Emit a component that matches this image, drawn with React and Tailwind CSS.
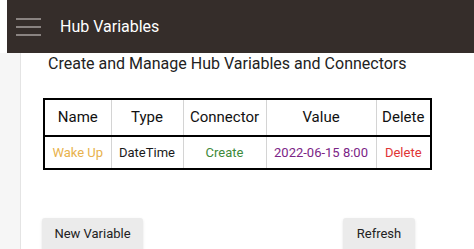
import React from "react";

const columns = [
  { label: "Name", width: "w-[67px]" },
  { label: "Type", width: "w-[72px]" },
  { label: "Connector", width: "w-[83px]" },
  { label: "Value", width: "w-[110px]" },
  { label: "Delete", width: "w-[55px]" },
];

const App = () => {
  return (
    <div
      className="w-[474px] h-[249px] overflow-hidden bg-white flex flex-col"
      style={{ fontFamily: "Roboto, 'Liberation Sans', sans-serif" }}
    >
      {/* top bar */}
      <div className="ml-[7px] h-[53px] shrink-0 bg-[#352d2a] flex items-center">
        <div className="ml-[9px] w-[25px] flex flex-col gap-[6px]">
          <span className="block h-[2px] bg-[#8a8381]" />
          <span className="block h-[2px] bg-[#8a8381]" />
          <span className="block h-[2px] bg-[#8a8381]" />
        </div>
        <span className="ml-[19px] text-white text-[16px] leading-none">Hub Variables</span>
      </div>

      <div className="flex flex-1">
        {/* side strip */}
        <div className="w-[21px] shrink-0 bg-[#f6f6f6] border-r border-[#e4e4e4]" />

        <div className="flex-1 flex flex-col">
          <h1 className="pl-[27px] pt-[1px] text-[16px] leading-[20px] text-[#222]">
            Create and Manage Hub Variables and Connectors
          </h1>

          <table className="ml-[22px] mt-[24px] w-[387px] border-collapse border-2 border-black table-fixed">
            <thead>
              <tr className="h-[37px] border-b-2 border-black">
                {columns.map((c) => (
                  <th
                    key={c.label}
                    className={`${c.width} font-normal text-[15px] text-[#111] border-x border-[#d4d4d4] text-center`}
                  >
                    {c.label}
                  </th>
                ))}
              </tr>
            </thead>
            <tbody>
              <tr className="h-[33px] text-[13px] text-center">
                <td className="border-x border-[#d4d4d4] text-[#e8b24c]">Wake Up</td>
                <td className="border-x border-[#d4d4d4] text-[#1a1a1a]">DateTime</td>
                <td className="border-x border-[#d4d4d4] text-[#3d8a3a]">Create</td>
                <td className="border-x border-[#d4d4d4] text-[#7b2486]">2022-06-15 8:00</td>
                <td className="border-x border-[#d4d4d4] text-[#e03535]">Delete</td>
              </tr>
            </tbody>
          </table>

          <div className="mt-[48px] ml-[21px] w-[373px] flex justify-between">
            <button className="w-[101px] h-[36px] bg-[#ebebeb] rounded-[3px] shadow-sm text-[13px] text-[#222] pb-[4px]">
              New Variable
            </button>
            <button className="w-[72px] h-[36px] bg-[#ebebeb] rounded-[3px] shadow-sm text-[13px] text-[#222] pb-[4px]">
              Refresh
            </button>
          </div>
        </div>
      </div>
    </div>
  );
};

export default App;
